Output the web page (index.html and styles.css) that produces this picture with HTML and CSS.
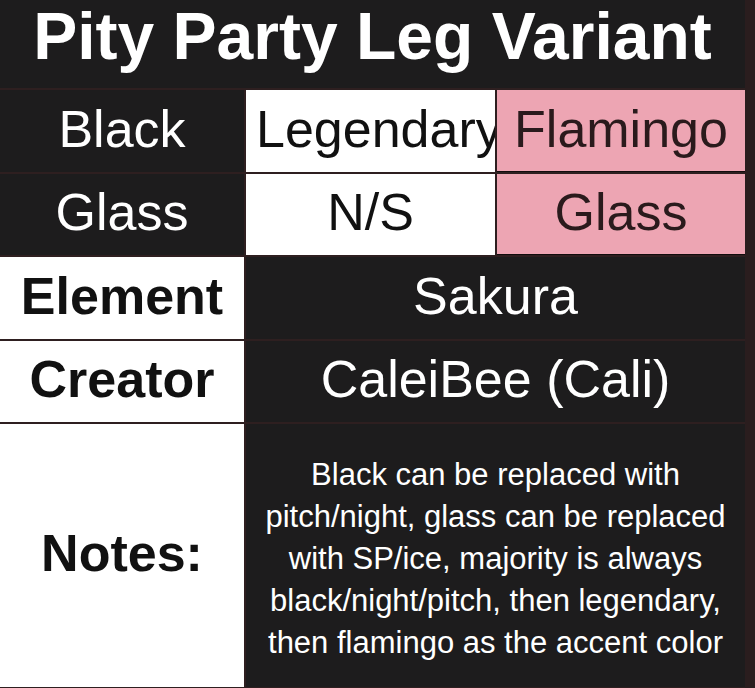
FILE: index.html
```html
<!DOCTYPE html>
<html lang="en">
<head>
<meta charset="utf-8">
<title>Pity Party Leg Variant</title>
<link rel="stylesheet" href="styles.css">
</head>
<body>
<div class="sheet">
  <div class="cell dark title">Pity Party Leg Variant</div>

  <div class="cell dark">Black</div>
  <div class="cell white overflow">Legendary</div>
  <div class="cell pink">Flamingo</div>

  <div class="cell dark">Glass</div>
  <div class="cell white">N/S</div>
  <div class="cell pink">Glass</div>

  <div class="cell white label">Element</div>
  <div class="cell dark wide">Sakura</div>

  <div class="cell white label">Creator</div>
  <div class="cell dark wide">CaleiBee (Cali)</div>

  <div class="cell white label">Notes:</div>
  <div class="cell dark wide notes">Black can be replaced with<br>pitch/night, glass can be replaced<br>with SP/ice, majority is always<br>black/night/pitch, then legendary,<br>then flamingo as the accent color</div>
</div>
</body>
</html>
```

FILE: styles.css
```css
html, body {
  margin: 0;
  padding: 0;
}

body {
  width: 755px;
  height: 688px;
  overflow: hidden;
  background: #2a1d1e;
  font-family: "Liberation Sans", Arial, sans-serif;
}

.sheet {
  width: 745px;
  height: 688px;
  display: grid;
  grid-template-columns: 244px 249px 248px;
  grid-template-rows: 88px 82px 81px 82px 81px 263px;
  column-gap: 2px;
  row-gap: 2px;
  background: #2e1f20;
}

.cell {
  display: flex;
  align-items: center;
  justify-content: center;
  font-size: 52px;
  white-space: nowrap;
  overflow: hidden;
  box-sizing: border-box;
  padding-bottom: 5px;
}

.dark {
  background: #1d1c1d;
  color: #ffffff;
}

.white {
  background: #ffffff;
  color: #111111;
}

.pink {
  background: #eda5b3;
  color: #2a1a1c;
  box-shadow: inset 0 -1px 0 #120c0d;
}

.title {
  grid-column: 1 / 4;
  font-size: 66px;
  font-weight: 700;
  padding-bottom: 17px;
}

.overflow {
  justify-content: flex-start;
  padding-left: 10px;
}

.label {
  font-weight: 700;
}

.wide {
  grid-column: 2 / 4;
}

.notes {
  font-size: 31px;
  line-height: 42px;
  text-align: center;
  padding-bottom: 0;
  padding-top: 6px;
}
```
